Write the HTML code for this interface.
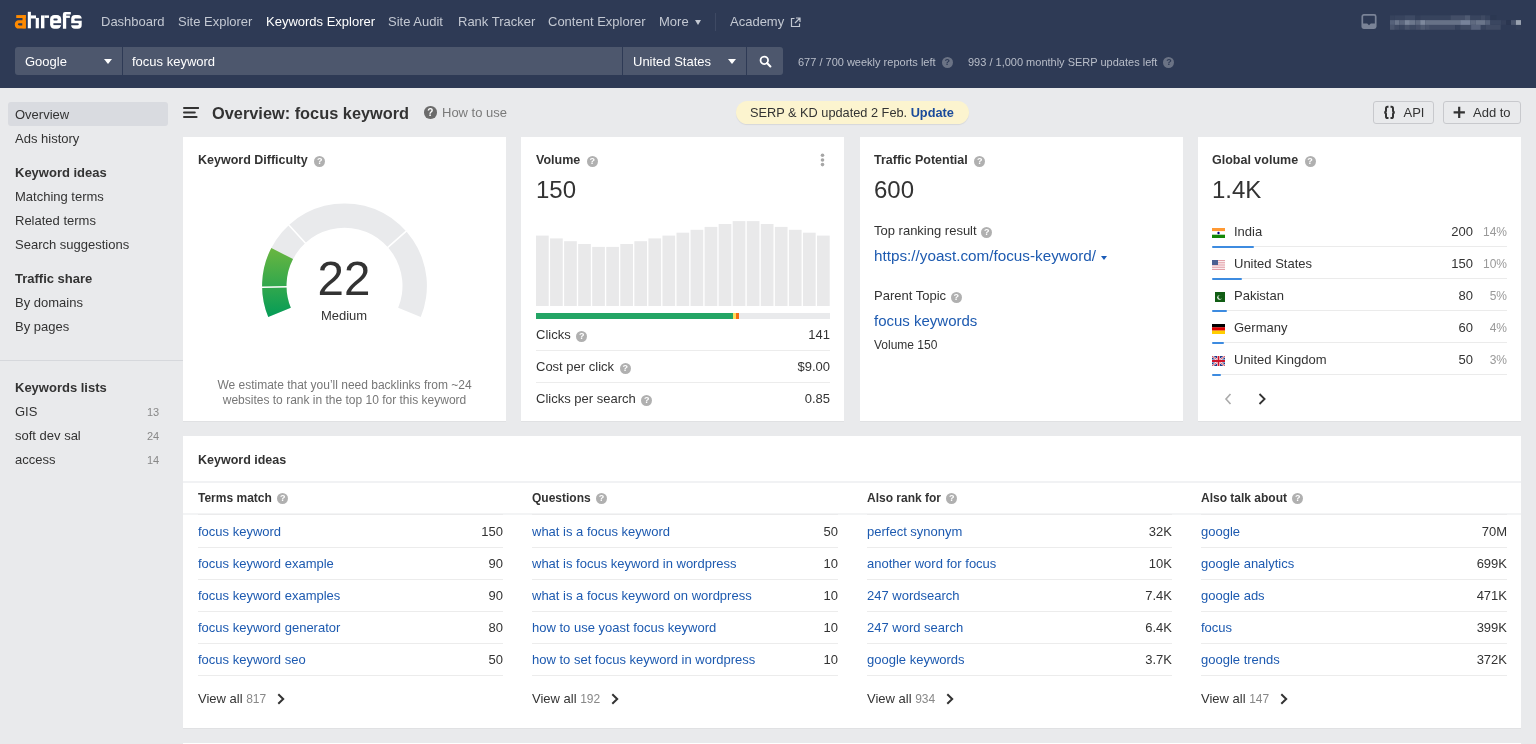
<!DOCTYPE html>
<html><head><meta charset="utf-8"><style>
*{box-sizing:border-box;margin:0;padding:0}
html,body{width:1536px;height:744px;overflow:hidden}
body{background:#e9eaec;font-family:"Liberation Sans",sans-serif;font-size:13px;color:#333;position:relative}
.a{position:absolute;white-space:nowrap;line-height:16px}
.hdr{position:absolute;left:0;top:0;width:1536px;height:88px;background:#2e3a55}
.nav{color:#c3c8d2;font-size:13px;top:14px}
.q{display:inline-block;width:11px;height:11px;border-radius:50%;background:#b0b0b0;color:#fff;font-size:9px;line-height:11px;text-align:center;font-weight:bold;vertical-align:middle;position:relative;top:1px}
.qh{top:-0.5px}
.qh{background:#6b7385;color:#2e3a55}
.sel{position:absolute;top:47px;height:28px;background:#4d576d;border-radius:3px}
.card{position:absolute;background:#fff;box-shadow:0 1px 0 rgba(0,0,0,.035)}
.ct{font-weight:bold;font-size:12.5px;color:#333}
.ch{font-size:12px}
.big{font-size:24px;color:#333;line-height:28px}
.sb{left:15px;color:#333;margin-top:1px}
.sbh{font-weight:bold}
.lnk{color:#1d5ab0}
.gray{color:#888}
.hr{position:absolute;height:1px;background:#ececec}
.caret{display:inline-block;width:0;height:0;border-left:4px solid transparent;border-right:4px solid transparent;border-top:5px solid #fff}
</style></head><body><div style="position:absolute;left:0;top:0;width:1536px;height:744px;will-change:transform">
<div class="hdr"></div>
<!-- logo -->
<svg class="a" style="left:14px;top:11px" width="70" height="19" viewBox="0 0 70 19">
<g fill="#ff8a00"><path d="M2.2 4.1H11.8V7H2.2Z"/><path d="M8.5 4.1H11.8V17.3H8.5Z"/><path d="M11.8 9.2H4.8C2.3 9.2 0.8 10.9 0.8 13.4C0.8 15.9 2.3 17.6 4.8 17.6H11.8ZM8.5 12.2H5.6C4.5 12.2 3.9 12.7 3.9 13.3C3.9 13.9 4.5 14.4 5.6 14.4H8.5Z" fill-rule="evenodd"/></g>
<g fill="#fff"><path d="M13.8 0.8H16.9V17.3H13.8Z"/><path d="M16.9 4.4H22V7.5H16.9Z"/><path d="M21.7 6.9H24.9V17.3H21.7Z"/>
<path d="M27 4.4H30.4V17.3H27Z"/><path d="M30.4 4.4H35V6.9H30.4Z"/>
<rect x="36.1" y="4.1" width="11.1" height="13.6" rx="4.2"/>
<path d="M48.9 17.7V3.2Q48.9 1 51.1 1H56.8V3.4H52.2V17.7Z"/><path d="M48.9 4.6H55.9V6.9H48.9Z"/>
<rect x="57.2" y="4.1" width="10.5" height="13.6" rx="3.8"/></g>
<g fill="#2e3a55"><rect x="39.4" y="7.4" width="4.3" height="2.1" rx="1"/><path d="M39.4 12.2H47.3V14.1H39.4Z"/>
<rect x="60.4" y="7.5" width="8" height="2.2" rx="1"/><rect x="56.5" y="12.3" width="8.3" height="2" rx="1"/></g>
</svg>
<div class="a nav" style="left:101px">Dashboard</div>
<div class="a nav" style="left:178px">Site Explorer</div>
<div class="a nav" style="left:266px;color:#fff">Keywords Explorer</div>
<div class="a nav" style="left:388px">Site Audit</div>
<div class="a nav" style="left:458px">Rank Tracker</div>
<div class="a nav" style="left:548px">Content Explorer</div>
<div class="a nav" style="left:659px">More <span class="caret" style="border-top-color:#c3c8d2;vertical-align:1px;margin-left:3px;border-width:5px 3.5px 0"></span></div>
<div class="a" style="left:715px;top:13px;width:1px;height:18px;background:#3e4963"></div>
<div class="a nav" style="left:730px">Academy</div>
<svg class="a" style="left:789.5px;top:16.5px" width="11" height="11" viewBox="0 0 11 11"><path d="M4.5 1.5H1.5v8h8v-3M6 1h4v4M10 1L5 6" fill="none" stroke="#c3c8d2" stroke-width="1.2"/></svg>
<!-- right side -->
<svg class="a" style="left:1361px;top:14px" width="16" height="15" viewBox="0 0 16 15"><rect x="1.3" y="0.9" width="13.4" height="13.2" rx="1.6" fill="none" stroke="#7a8397" stroke-width="1.7"/><path d="M1 9.6h5.2l1.8 1.6 1.8-1.6H15V14H1z" fill="#7a8397"/></svg>
<svg class="a" style="left:1390px;top:5px" width="132" height="25" viewBox="0 0 132 25"><rect x="-0.0" y="10.3" width="4.8" height="4.8" fill="#36425c"/><rect x="4.8" y="10.3" width="9.7" height="4.8" fill="#38445e"/><rect x="14.5" y="10.3" width="10.9" height="4.8" fill="#3e4a64"/><rect x="25.4" y="10.3" width="4.8" height="4.8" fill="#333f59"/><rect x="30.2" y="10.3" width="30.3" height="4.8" fill="#37435d"/><rect x="60.5" y="10.3" width="14.5" height="4.8" fill="#434e67"/><rect x="75.0" y="10.3" width="5.4" height="4.8" fill="#4f5a72"/><rect x="80.5" y="10.3" width="10.3" height="4.8" fill="#38445e"/><rect x="90.8" y="10.3" width="4.8" height="4.8" fill="#3f4a63"/><rect x="95.6" y="10.3" width="4.8" height="4.8" fill="#36425c"/><rect x="100.4" y="10.3" width="6.1" height="4.8" fill="#2c3852"/><rect x="-0.0" y="15.1" width="4.8" height="4.8" fill="#56627a"/><rect x="4.8" y="15.1" width="4.8" height="4.8" fill="#6b768b"/><rect x="9.6" y="15.1" width="4.8" height="4.8" fill="#5c677e"/><rect x="14.5" y="15.1" width="5.4" height="4.8" fill="#7a859a"/><rect x="19.9" y="15.1" width="5.4" height="4.8" fill="#6c778c"/><rect x="25.4" y="15.1" width="4.8" height="4.8" fill="#5f6a80"/><rect x="30.2" y="15.1" width="4.8" height="4.8" fill="#7d889c"/><rect x="35.1" y="15.1" width="35.1" height="4.8" fill="#677287"/><rect x="70.2" y="15.1" width="10.3" height="4.8" fill="#77829a"/><rect x="80.5" y="15.1" width="5.4" height="4.8" fill="#5f6a80"/><rect x="85.9" y="15.1" width="9.7" height="4.8" fill="#6a758a"/><rect x="95.6" y="15.1" width="4.8" height="4.8" fill="#56627a"/><rect x="100.4" y="15.1" width="10.9" height="4.8" fill="#3a4660"/><rect x="111.3" y="15.1" width="4.8" height="4.8" fill="#343f59"/><rect x="116.2" y="15.1" width="4.8" height="4.8" fill="#2b3650"/><rect x="121.0" y="15.1" width="4.8" height="4.8" fill="#4a556d"/><rect x="125.9" y="15.1" width="5.1" height="4.8" fill="#9aa2b0"/><rect x="-0.0" y="20.0" width="4.8" height="4.8" fill="#4b566e"/><rect x="4.8" y="20.0" width="4.8" height="4.8" fill="#404b64"/><rect x="9.6" y="20.0" width="4.8" height="4.8" fill="#3a4660"/><rect x="14.5" y="20.0" width="5.4" height="4.8" fill="#48536b"/><rect x="19.9" y="20.0" width="5.4" height="4.8" fill="#3e4a63"/><rect x="25.4" y="20.0" width="4.8" height="4.8" fill="#454f68"/><rect x="30.2" y="20.0" width="4.8" height="4.8" fill="#505b72"/><rect x="35.1" y="20.0" width="4.8" height="4.8" fill="#48536b"/><rect x="39.9" y="20.0" width="25.4" height="4.8" fill="#414c65"/><rect x="65.3" y="20.0" width="4.8" height="4.8" fill="#36425c"/><rect x="70.2" y="20.0" width="10.9" height="4.8" fill="#404b64"/><rect x="81.1" y="20.0" width="9.7" height="4.8" fill="#56617a"/><rect x="90.8" y="20.0" width="4.8" height="4.8" fill="#38445e"/><rect x="95.6" y="20.0" width="15.1" height="4.8" fill="#3f4a63"/><rect x="125.9" y="20.0" width="5.1" height="4.8" fill="#323e58"/></svg>

<!-- search row -->
<div class="sel" style="left:15px;width:107px;border-radius:3px 0 0 3px"></div>
<div class="sel" style="left:123px;width:499px;border-radius:0"></div>
<div class="sel" style="left:623px;width:123px;border-radius:0"></div>
<div class="sel" style="left:747px;width:36px;border-radius:0 3px 3px 0"></div>
<div class="a" style="left:25px;top:54px;color:#fff;font-size:13px">Google</div>
<span class="a caret" style="left:104px;top:59px"></span>
<div class="a" style="left:132px;top:54px;color:#fff;font-size:13px">focus keyword</div>
<div class="a" style="left:633px;top:54px;color:#fff;font-size:13px">United States</div>
<span class="a caret" style="left:728px;top:59px"></span>
<svg class="a" style="left:759px;top:55px" width="14" height="14" viewBox="0 0 14 14"><circle cx="5.3" cy="5.3" r="3.75" fill="none" stroke="#fff" stroke-width="1.8"/><path d="M8 8l3.4 3.4" stroke="#fff" stroke-width="2.1" stroke-linecap="round"/></svg>
<div class="a" style="left:798px;top:54px;color:#b9bec9;font-size:11px">677 / 700 weekly reports left <span class="q qh" style="margin-left:3px">?</span></div>
<div class="a" style="left:968px;top:54px;color:#b9bec9;font-size:11px">993 / 1,000 monthly SERP updates left <span class="q qh" style="margin-left:3px">?</span></div>

<!-- sidebar -->
<div class="a" style="left:8px;top:102px;width:160px;height:24px;background:#d9dbe0;border-radius:3px"></div>
<div class="a sb" style="top:106px">Overview</div>
<div class="a sb" style="top:130px">Ads history</div>
<div class="a sb sbh" style="top:164px">Keyword ideas</div>
<div class="a sb" style="top:188px">Matching terms</div>
<div class="a sb" style="top:212px">Related terms</div>
<div class="a sb" style="top:236px">Search suggestions</div>
<div class="a sb sbh" style="top:270px">Traffic share</div>
<div class="a sb" style="top:294px">By domains</div>
<div class="a sb" style="top:318px">By pages</div>
<div class="a" style="left:0;top:360px;width:183px;height:1px;background:#d6d8dc"></div>
<div class="a sb sbh" style="top:379px">Keywords lists</div>
<div class="a sb" style="top:403px">GIS</div>
<div class="a sb" style="top:427px">soft dev sal</div>
<div class="a sb" style="top:451px">access</div>
<div class="a gray" style="left:147px;top:404px;font-size:11px">13</div>
<div class="a gray" style="left:147px;top:428px;font-size:11px">24</div>
<div class="a gray" style="left:147px;top:452px;font-size:11px">14</div>

<!-- title row -->
<svg class="a" style="left:182px;top:105px" width="17" height="15" viewBox="0 0 17 15"><path d="M2 3h14.4M2 7.5h10.8M2 12h12.6" stroke="#333" stroke-width="2" stroke-linecap="round"/></svg>
<div class="a" style="left:212px;top:103px;font-size:16.35px;line-height:20px;font-weight:bold;color:#333">Overview: focus keyword</div>
<span class="q" style="position:absolute;left:424px;top:106px;width:12.5px;height:12.5px;line-height:13px;background:#6b6b6b;font-size:10px">?</span>
<div class="a" style="left:442px;top:105px;color:#7a7a7a">How to use</div>
<div class="a" style="left:735.5px;top:100.5px;width:233.5px;height:23.5px;border-radius:12px;background:#fcf4cf;box-shadow:0 1px 1px rgba(0,0,0,.08)"></div>
<div class="a" style="left:750px;top:105px;color:#333;font-size:12.75px">SERP &amp; KD updated 2 Feb. <b style="color:#1a4b9b">Update</b></div>
<div class="a" style="left:1373px;top:100.5px;width:60.5px;height:23.5px;border:1px solid #c8c9cd;border-radius:3px"></div>
<svg class="a" style="left:1382px;top:105px" width="15" height="15" viewBox="0 0 15 15"><path d="M6.5 1.8H5.6Q4 1.8 4 3.4V5.6Q4 7.4 2.2 7.4Q4 7.4 4 9.2V11.4Q4 13 5.6 13H6.5M8.5 1.8H9.4Q11 1.8 11 3.4V5.6Q11 7.4 12.8 7.4Q11 7.4 11 9.2V11.4Q11 13 9.4 13H8.5" fill="none" stroke="#333" stroke-width="2"/></svg>
<div class="a" style="left:1403.5px;top:105px;color:#333">API</div>
<div class="a" style="left:1443px;top:100.5px;width:78px;height:23.5px;border:1px solid #c8c9cd;border-radius:3px"></div>
<svg class="a" style="left:1453px;top:106px" width="13" height="13" viewBox="0 0 13 13"><path d="M6.2 0.8V11.9M0.6 6.4H11.9" stroke="#333" stroke-width="2.2"/></svg>
<div class="a" style="left:1473px;top:105px;color:#333">Add to</div>

<!-- cards -->
<div class="card" style="left:183px;top:137px;width:323px;height:284px"></div>
<div class="card" style="left:521px;top:137px;width:323px;height:284px"></div>
<div class="card" style="left:860px;top:137px;width:323px;height:284px"></div>
<div class="card" style="left:1198px;top:137px;width:323px;height:284px"></div>
<div class="card" style="left:183px;top:436px;width:1338px;height:292px"></div>
<div class="card" style="left:183px;top:743px;width:1338px;height:20px"></div>

<div class="a ct" style="left:198px;top:152px">Keyword Difficulty <span class="q" style="margin-left:3px">?</span></div>
<svg class="a" style="left:262px;top:203px" width="166" height="120" viewBox="0 0 166 120"><defs><linearGradient id="g" x1="0" y1="0" x2="0" y2="1"><stop offset="0" stop-color="#6ab640"/><stop offset="1" stop-color="#049c57"/></linearGradient></defs><path d="M6.26 114.07A82.4 82.4 0 1 1 158.74 114.07L136.16 104.81A58 58 0 1 0 28.84 104.81Z" fill="#e9eaec"/><path d="M6.26 114.07A82.4 82.4 0 0 1 9.34 44.88L31.01 56.11A58 58 0 0 0 28.84 104.81Z" fill="url(#g)"/><path d="M-1.89 84.27L26.51 83.78 M25.48 20.57L44.67 41.51 M145.71 26.87L124.44 45.69" stroke="#fff" stroke-width="1.6"/></svg>
<div class="a" style="left:264px;top:255px;width:160px;text-align:center;font-size:47.5px;line-height:48px;color:#333">22</div>
<div class="a" style="left:264px;top:308px;width:160px;text-align:center;font-size:13px;color:#333">Medium</div>
<div class="a" style="left:183px;top:377.5px;width:323px;text-align:center;font-size:12px;line-height:15.3px;color:#777;white-space:normal">We estimate that you’ll need backlinks from ~24<br>websites to rank in the top 10 for this keyword</div>
<div class="a ct" style="left:536px;top:152px">Volume <span class="q" style="margin-left:3px">?</span></div>
<svg class="a" style="left:819.5px;top:153px" width="5" height="14" viewBox="0 0 5 14"><circle cx="2.5" cy="2.3" r="1.8" fill="#a6a6a6"/><circle cx="2.5" cy="6.95" r="1.8" fill="#a6a6a6"/><circle cx="2.5" cy="11.6" r="1.8" fill="#a6a6a6"/></svg>
<div class="a big" style="left:536px;top:176px">150</div>
<svg class="a" style="left:536px;top:215px" width="296" height="92" viewBox="0 0 296 92"><g fill="#e9e9ea"><rect x="0.00" y="20.6" width="12.7" height="70.4"/><rect x="14.05" y="23.4" width="12.7" height="67.6"/><rect x="28.10" y="26.2" width="12.7" height="64.8"/><rect x="42.15" y="29.0" width="12.7" height="62.0"/><rect x="56.20" y="31.9" width="12.7" height="59.1"/><rect x="70.25" y="31.9" width="12.7" height="59.1"/><rect x="84.30" y="29.0" width="12.7" height="62.0"/><rect x="98.35" y="26.2" width="12.7" height="64.8"/><rect x="112.40" y="23.4" width="12.7" height="67.6"/><rect x="126.45" y="20.6" width="12.7" height="70.4"/><rect x="140.50" y="17.7" width="12.7" height="73.3"/><rect x="154.55" y="14.8" width="12.7" height="76.2"/><rect x="168.60" y="11.9" width="12.7" height="79.1"/><rect x="182.65" y="9.0" width="12.7" height="82.0"/><rect x="196.70" y="6.1" width="12.7" height="84.9"/><rect x="210.75" y="6.1" width="12.7" height="84.9"/><rect x="224.80" y="9.0" width="12.7" height="82.0"/><rect x="238.85" y="11.9" width="12.7" height="79.1"/><rect x="252.90" y="14.8" width="12.7" height="76.2"/><rect x="266.95" y="17.7" width="12.7" height="73.3"/><rect x="281.00" y="20.6" width="12.7" height="70.4"/></g></svg>
<div class="a" style="left:536px;top:313px;width:294px;height:6px;background:#e9eaec"></div>
<div class="a" style="left:536px;top:313px;width:197px;height:6px;background:#23a565"></div>
<div class="a" style="left:733px;top:313px;width:3px;height:6px;background:#fcdc5c"></div>
<div class="a" style="left:736px;top:313px;width:3px;height:6px;background:#f56c12"></div>
<div class="a" style="left:536px;top:327px">Clicks <span class="q" style="margin-left:2px">?</span></div>
<div class="a" style="left:630px;top:327px;width:200px;text-align:right">141</div>
<div class="hr" style="left:536px;top:350px;width:294px"></div>
<div class="a" style="left:536px;top:359px">Cost per click <span class="q" style="margin-left:2px">?</span></div>
<div class="a" style="left:630px;top:359px;width:200px;text-align:right">$9.00</div>
<div class="hr" style="left:536px;top:382px;width:294px"></div>
<div class="a" style="left:536px;top:391px">Clicks per search <span class="q" style="margin-left:2px">?</span></div>
<div class="a" style="left:630px;top:391px;width:200px;text-align:right">0.85</div>
<div class="a ct" style="left:874px;top:152px">Traffic Potential <span class="q" style="margin-left:3px">?</span></div>
<div class="a big" style="left:874px;top:176px">600</div>
<div class="a" style="left:874px;top:223px">Top ranking result <span class="q" style="margin-left:1px">?</span></div>
<div class="a lnk" style="left:874px;top:247px;font-size:15.25px;line-height:18px">https://yoast.com/focus-keyword/<span class="caret" style="border-top-color:#1b5cb8;vertical-align:1px;border-width:4.5px 3.5px 0;margin-left:5px"></span></div>
<div class="a" style="left:874px;top:288px">Parent Topic <span class="q" style="margin-left:1px">?</span></div>
<div class="a lnk" style="left:874px;top:312px;font-size:15px;line-height:18px">focus keywords</div>
<div class="a" style="left:874px;top:338px;font-size:12px;line-height:15px">Volume 150</div>
<div class="a ct" style="left:1212px;top:152px">Global volume <span class="q" style="margin-left:3px">?</span></div>
<div class="a big" style="left:1212px;top:176px">1.4K</div>
<div class="a" style="left:1212px;top:227.5px;line-height:10px;height:10px"><svg width="13" height="10" viewBox="0 0 13 10"><rect width="13" height="3.3" fill="#ff9933"/><rect y="3.3" width="13" height="3.4" fill="#fff"/><rect y="6.7" width="13" height="3.3" fill="#138808"/><circle cx="6.5" cy="5" r="1.2" fill="#000080"/></svg></div>
<div class="a" style="left:1234px;top:224px">India</div>
<div class="a" style="left:1373px;top:224px;width:100px;text-align:right">200</div>
<div class="a gray" style="left:1447px;top:225px;width:60px;text-align:right;font-size:12px;line-height:15px;color:#999">14%</div>
<div class="hr" style="left:1212px;top:246px;width:295px;background:#ebebeb"></div>
<div class="a" style="left:1212px;top:246px;width:42px;height:2px;background:#3d8be0;border-radius:1px"></div>
<div class="a" style="left:1212px;top:259.5px;line-height:10px;height:10px"><svg width="13" height="10" viewBox="0 0 13 10"><rect width="13" height="10" fill="#fff"/><g fill="#e3a0a8"><rect y="0" width="13" height="1.2"/><rect y="2.2" width="13" height="1.2"/><rect y="4.4" width="13" height="1.2"/><rect y="6.6" width="13" height="1.2"/><rect y="8.8" width="13" height="1.2"/></g><rect width="6" height="5" fill="#4b5f91"/></svg></div>
<div class="a" style="left:1234px;top:256px">United States</div>
<div class="a" style="left:1373px;top:256px;width:100px;text-align:right">150</div>
<div class="a gray" style="left:1447px;top:257px;width:60px;text-align:right;font-size:12px;line-height:15px;color:#999">10%</div>
<div class="hr" style="left:1212px;top:278px;width:295px;background:#ebebeb"></div>
<div class="a" style="left:1212px;top:278px;width:30px;height:2px;background:#3d8be0;border-radius:1px"></div>
<div class="a" style="left:1212px;top:291.5px;line-height:10px;height:10px"><svg width="13" height="10" viewBox="0 0 13 10"><rect x="3" width="10" height="10" fill="#115d14"/><circle cx="7.5" cy="5.5" r="2.3" fill="#fff"/><circle cx="8.3" cy="4.9" r="2" fill="#115d14"/></svg></div>
<div class="a" style="left:1234px;top:288px">Pakistan</div>
<div class="a" style="left:1373px;top:288px;width:100px;text-align:right">80</div>
<div class="a gray" style="left:1447px;top:289px;width:60px;text-align:right;font-size:12px;line-height:15px;color:#999">5%</div>
<div class="hr" style="left:1212px;top:310px;width:295px;background:#ebebeb"></div>
<div class="a" style="left:1212px;top:310px;width:15px;height:2px;background:#3d8be0;border-radius:1px"></div>
<div class="a" style="left:1212px;top:323.5px;line-height:10px;height:10px"><svg width="13" height="10" viewBox="0 0 13 10"><rect width="13" height="3.4" fill="#000"/><rect y="3.3" width="13" height="3.4" fill="#dd0000"/><rect y="6.6" width="13" height="3.4" fill="#ffce00"/></svg></div>
<div class="a" style="left:1234px;top:320px">Germany</div>
<div class="a" style="left:1373px;top:320px;width:100px;text-align:right">60</div>
<div class="a gray" style="left:1447px;top:321px;width:60px;text-align:right;font-size:12px;line-height:15px;color:#999">4%</div>
<div class="hr" style="left:1212px;top:342px;width:295px;background:#ebebeb"></div>
<div class="a" style="left:1212px;top:342px;width:12px;height:2px;background:#3d8be0;border-radius:1px"></div>
<div class="a" style="left:1212px;top:355.5px;line-height:10px;height:10px"><svg width="13" height="10" viewBox="0 0 13 10"><rect width="13" height="10" fill="#1f3a8a"/><path d="M0 0L13 10M13 0L0 10" stroke="#fff" stroke-width="2"/><path d="M0 0L13 10M13 0L0 10" stroke="#cf142b" stroke-width="0.8"/><path d="M6.5 0V10M0 5H13" stroke="#fff" stroke-width="3"/><path d="M6.5 0V10M0 5H13" stroke="#cf142b" stroke-width="1.8"/></svg></div>
<div class="a" style="left:1234px;top:352px">United Kingdom</div>
<div class="a" style="left:1373px;top:352px;width:100px;text-align:right">50</div>
<div class="a gray" style="left:1447px;top:353px;width:60px;text-align:right;font-size:12px;line-height:15px;color:#999">3%</div>
<div class="hr" style="left:1212px;top:374px;width:295px;background:#ebebeb"></div>
<div class="a" style="left:1212px;top:374px;width:9px;height:2px;background:#3d8be0;border-radius:1px"></div>
<svg class="a" style="left:1224px;top:392.5px" width="8" height="12" viewBox="0 0 8 12"><path d="M6.5 1L2 6l4.5 5" fill="none" stroke="#aaa" stroke-width="1.6"/></svg>
<svg class="a" style="left:1258px;top:392.5px" width="8" height="12" viewBox="0 0 8 12"><path d="M1.5 1L6.6 6l-5.1 5" fill="none" stroke="#333" stroke-width="1.8"/></svg>
<div class="a ct" style="left:198px;top:452px">Keyword ideas</div>
<div class="hr" style="left:183px;top:481px;width:1338px;height:2px;background:#f1f2f4"></div>
<div class="hr" style="left:183px;top:513px;width:1338px;height:2px;background:#f3f4f5"></div><div class="hr" style="left:198px;top:514px;width:305px;background:#ebebec"></div><div class="hr" style="left:532px;top:514px;width:306px;background:#ebebec"></div><div class="hr" style="left:867px;top:514px;width:305px;background:#ebebec"></div><div class="hr" style="left:1201px;top:514px;width:306px;background:#ebebec"></div>
<div class="a ct ch" style="left:198px;top:490px">Terms match <span class="q" style="margin-left:2px;top:0">?</span></div>
<div class="a lnk" style="left:198px;top:524px">focus keyword</div>
<div class="a" style="left:403px;top:524px;width:100px;text-align:right">150</div>
<div class="hr" style="left:198px;top:547px;width:305px"></div>
<div class="a lnk" style="left:198px;top:556px">focus keyword example</div>
<div class="a" style="left:403px;top:556px;width:100px;text-align:right">90</div>
<div class="hr" style="left:198px;top:579px;width:305px"></div>
<div class="a lnk" style="left:198px;top:588px">focus keyword examples</div>
<div class="a" style="left:403px;top:588px;width:100px;text-align:right">90</div>
<div class="hr" style="left:198px;top:611px;width:305px"></div>
<div class="a lnk" style="left:198px;top:620px">focus keyword generator</div>
<div class="a" style="left:403px;top:620px;width:100px;text-align:right">80</div>
<div class="hr" style="left:198px;top:643px;width:305px"></div>
<div class="a lnk" style="left:198px;top:652px">focus keyword seo</div>
<div class="a" style="left:403px;top:652px;width:100px;text-align:right">50</div>
<div class="hr" style="left:198px;top:675px;width:305px"></div>
<div class="a" style="left:198px;top:691px">View all <span class="gray" style="font-size:12px">817</span></div><svg class="a" style="left:277px;top:693px" width="8" height="12" viewBox="0 0 8 12"><path d="M1.3 1.2L6.2 6l-4.9 4.8" fill="none" stroke="#333" stroke-width="2"/></svg>
<div class="a ct ch" style="left:532px;top:490px">Questions <span class="q" style="margin-left:2px;top:0">?</span></div>
<div class="a lnk" style="left:532px;top:524px">what is a focus keyword</div>
<div class="a" style="left:738px;top:524px;width:100px;text-align:right">50</div>
<div class="hr" style="left:532px;top:547px;width:306px"></div>
<div class="a lnk" style="left:532px;top:556px">what is focus keyword in wordpress</div>
<div class="a" style="left:738px;top:556px;width:100px;text-align:right">10</div>
<div class="hr" style="left:532px;top:579px;width:306px"></div>
<div class="a lnk" style="left:532px;top:588px">what is a focus keyword on wordpress</div>
<div class="a" style="left:738px;top:588px;width:100px;text-align:right">10</div>
<div class="hr" style="left:532px;top:611px;width:306px"></div>
<div class="a lnk" style="left:532px;top:620px">how to use yoast focus keyword</div>
<div class="a" style="left:738px;top:620px;width:100px;text-align:right">10</div>
<div class="hr" style="left:532px;top:643px;width:306px"></div>
<div class="a lnk" style="left:532px;top:652px">how to set focus keyword in wordpress</div>
<div class="a" style="left:738px;top:652px;width:100px;text-align:right">10</div>
<div class="hr" style="left:532px;top:675px;width:306px"></div>
<div class="a" style="left:532px;top:691px">View all <span class="gray" style="font-size:12px">192</span></div><svg class="a" style="left:611px;top:693px" width="8" height="12" viewBox="0 0 8 12"><path d="M1.3 1.2L6.2 6l-4.9 4.8" fill="none" stroke="#333" stroke-width="2"/></svg>
<div class="a ct ch" style="left:867px;top:490px">Also rank for <span class="q" style="margin-left:2px;top:0">?</span></div>
<div class="a lnk" style="left:867px;top:524px">perfect synonym</div>
<div class="a" style="left:1072px;top:524px;width:100px;text-align:right">32K</div>
<div class="hr" style="left:867px;top:547px;width:305px"></div>
<div class="a lnk" style="left:867px;top:556px">another word for focus</div>
<div class="a" style="left:1072px;top:556px;width:100px;text-align:right">10K</div>
<div class="hr" style="left:867px;top:579px;width:305px"></div>
<div class="a lnk" style="left:867px;top:588px">247 wordsearch</div>
<div class="a" style="left:1072px;top:588px;width:100px;text-align:right">7.4K</div>
<div class="hr" style="left:867px;top:611px;width:305px"></div>
<div class="a lnk" style="left:867px;top:620px">247 word search</div>
<div class="a" style="left:1072px;top:620px;width:100px;text-align:right">6.4K</div>
<div class="hr" style="left:867px;top:643px;width:305px"></div>
<div class="a lnk" style="left:867px;top:652px">google keywords</div>
<div class="a" style="left:1072px;top:652px;width:100px;text-align:right">3.7K</div>
<div class="hr" style="left:867px;top:675px;width:305px"></div>
<div class="a" style="left:867px;top:691px">View all <span class="gray" style="font-size:12px">934</span></div><svg class="a" style="left:946px;top:693px" width="8" height="12" viewBox="0 0 8 12"><path d="M1.3 1.2L6.2 6l-4.9 4.8" fill="none" stroke="#333" stroke-width="2"/></svg>
<div class="a ct ch" style="left:1201px;top:490px">Also talk about <span class="q" style="margin-left:2px;top:0">?</span></div>
<div class="a lnk" style="left:1201px;top:524px">google</div>
<div class="a" style="left:1407px;top:524px;width:100px;text-align:right">70M</div>
<div class="hr" style="left:1201px;top:547px;width:306px"></div>
<div class="a lnk" style="left:1201px;top:556px">google analytics</div>
<div class="a" style="left:1407px;top:556px;width:100px;text-align:right">699K</div>
<div class="hr" style="left:1201px;top:579px;width:306px"></div>
<div class="a lnk" style="left:1201px;top:588px">google ads</div>
<div class="a" style="left:1407px;top:588px;width:100px;text-align:right">471K</div>
<div class="hr" style="left:1201px;top:611px;width:306px"></div>
<div class="a lnk" style="left:1201px;top:620px">focus</div>
<div class="a" style="left:1407px;top:620px;width:100px;text-align:right">399K</div>
<div class="hr" style="left:1201px;top:643px;width:306px"></div>
<div class="a lnk" style="left:1201px;top:652px">google trends</div>
<div class="a" style="left:1407px;top:652px;width:100px;text-align:right">372K</div>
<div class="hr" style="left:1201px;top:675px;width:306px"></div>
<div class="a" style="left:1201px;top:691px">View all <span class="gray" style="font-size:12px">147</span></div><svg class="a" style="left:1280px;top:693px" width="8" height="12" viewBox="0 0 8 12"><path d="M1.3 1.2L6.2 6l-4.9 4.8" fill="none" stroke="#333" stroke-width="2"/></svg>
</div></body></html>
